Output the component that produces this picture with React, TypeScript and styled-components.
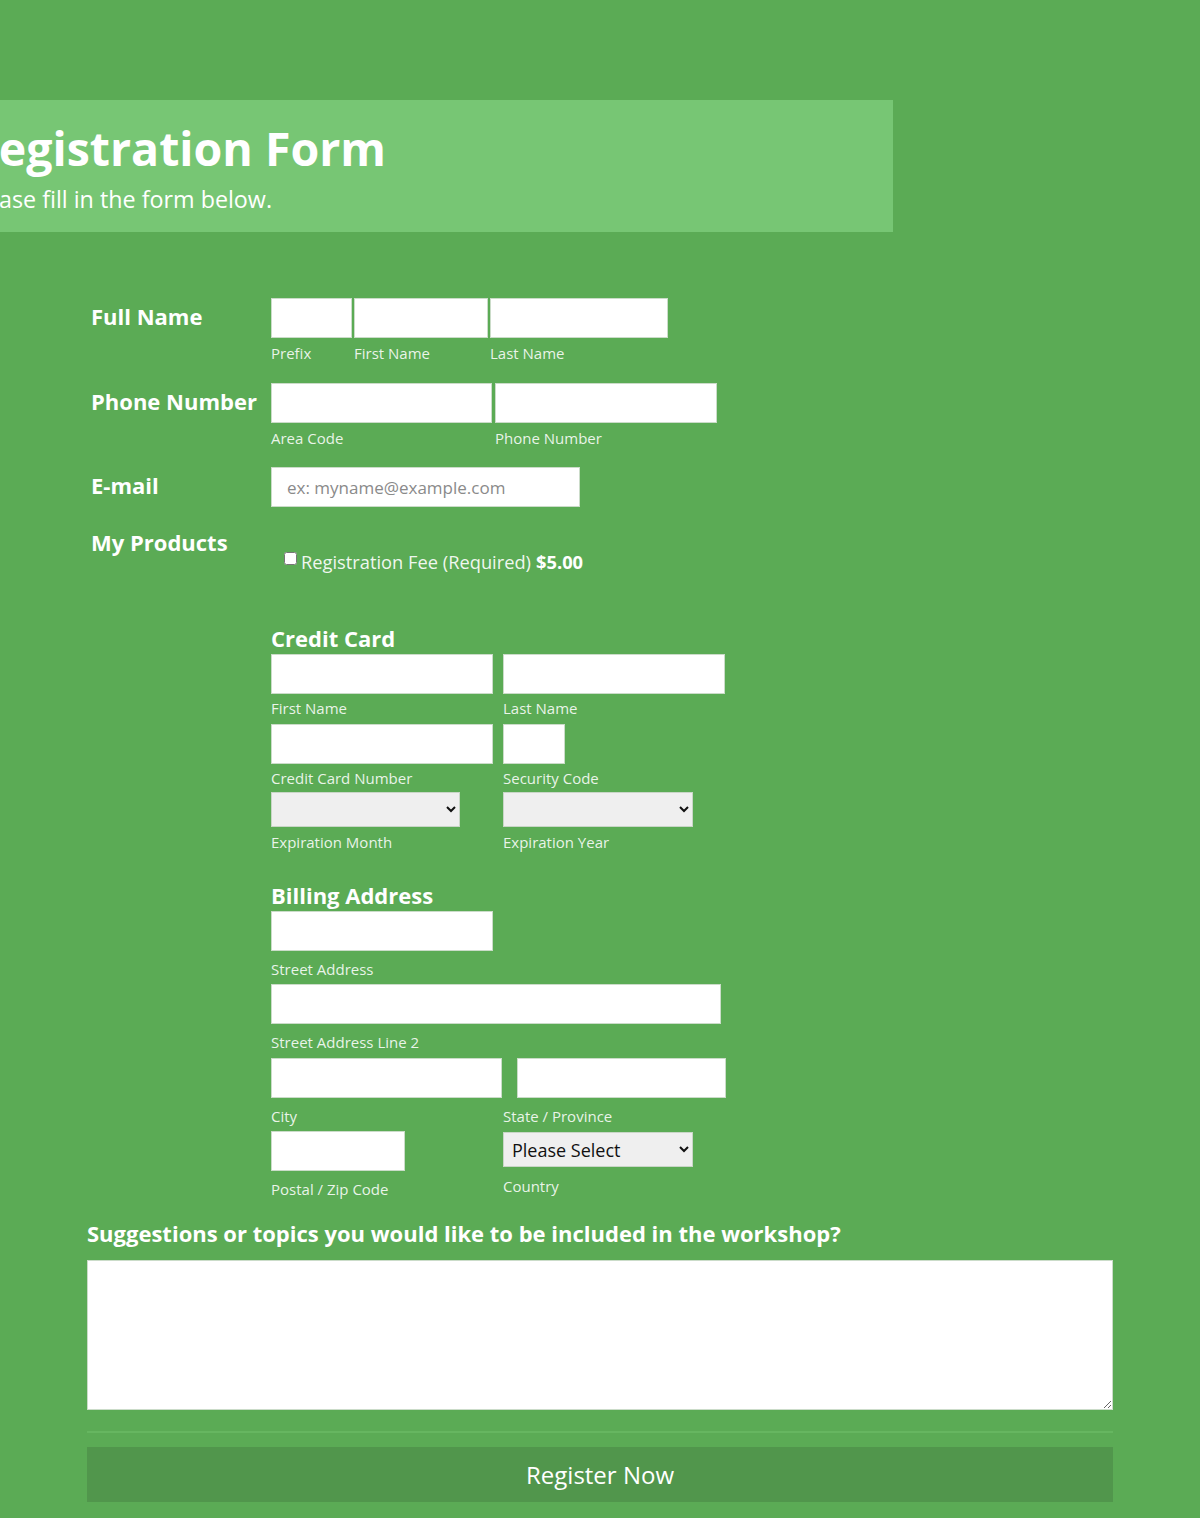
import React from "react";
import styled, { createGlobalStyle } from "styled-components";

const Global = createGlobalStyle`
  html, body { margin: 0; padding: 0; background: #5bab55; }
  body { font-family: "Open Sans", "Noto Sans", sans-serif; color: #fff; }
  * { box-sizing: border-box; }
`;

const Page = styled.div`
  min-height: 1518px;
  padding-top: 100px;
  background: #5bab55;
  overflow: hidden;
`;

const Banner = styled.header`
  width: 893px;
  height: 132px;
  background: #77c674;
  padding: 20px 0 0 0;
  overflow: hidden;
`;

const Title = styled.h1`
  margin: 0 0 0 -32px;
  font-size: 46.5px;
  line-height: 56px;
  font-weight: 700;
  white-space: nowrap;
`;

const Subtitle = styled.p`
  margin: 8px 0 0 -34px;
  font-size: 23.3px;
  line-height: 30px;
  font-weight: 400;
  white-space: nowrap;
`;

const Form = styled.form`
  padding: 66px 0 0 87px;
  width: 1113px;
`;

const Row = styled.div<{ $gap?: number }>`
  display: flex;
  align-items: flex-start;
  margin-bottom: ${(p) => p.$gap ?? 19}px;
`;

const Label = styled.div`
  width: 184px;
  flex: none;
  padding-left: 4px;
  font-size: 22px;
  line-height: 36px;
  font-weight: 700;
  white-space: nowrap;
`;

const Fields = styled.div<{ $pt?: number }>`
  display: flex;
  flex-direction: column;
  padding-top: ${(p) => p.$pt ?? 0}px;
`;

const Inline = styled.div<{ $gap?: number }>`
  display: flex;
  gap: ${(p) => p.$gap ?? 2}px;
`;

const Field = styled.div<{ $ml?: number; $mt?: number }>`
  display: flex;
  flex-direction: column;
  align-items: flex-start;
  margin-left: ${(p) => p.$ml ?? 0}px;
  margin-top: ${(p) => p.$mt ?? 0}px;
`;

const Input = styled.input<{ $w: number }>`
  width: ${(p) => p.$w}px;
  height: 40px;
  border: 1px solid #cbdcc9;
  background: #fff;
  padding: 0 15px;
  font-family: "Open Sans", sans-serif;
  font-size: 17px;
  color: #333;
  outline: none;
  &::placeholder { color: #8a8a8a; }
`;

const Select = styled.select<{ $w: number }>`
  width: ${(p) => p.$w}px;
  height: 35px;
  border: 1px solid #c9d6c7;
  background-color: #efefef;
  font-family: "Open Sans", sans-serif;
  font-size: 18px;
  color: #111;
  padding: 0 4px;
`;

const Sub = styled.span<{ $mt?: number }>`
  display: block;
  margin-top: ${(p) => p.$mt ?? 5}px;
  font-size: 15px;
  line-height: 20px;
  color: rgba(255, 255, 255, 0.88);
  white-space: nowrap;
`;

const CheckLine = styled.label`
  display: flex;
  align-items: flex-start;
  margin-left: 13px;
  font-size: 18.3px;
  line-height: 24px;
  color: rgba(255, 255, 255, 0.92);
  strong { color: #fff; font-weight: 700; margin-left: 5px; }
`;

const Check = styled.input`
  width: 13px;
  height: 13px;
  margin: 2px 4px 0 0;
`;

const Section = styled.div<{ $mt?: number }>`
  margin-left: 184px;
  margin-top: ${(p) => p.$mt ?? 0}px;
  display: flex;
  flex-direction: column;
`;

const SectionTitle = styled.h2`
  margin: 0 0 1px 0;
  font-size: 22px;
  line-height: 30px;
  font-weight: 700;
`;

const Grid = styled.div<{ $mt?: number; $rowGap?: number }>`
  display: grid;
  grid-template-columns: 222px 222px;
  column-gap: 10px;
  row-gap: ${(p) => p.$rowGap ?? 6}px;
  margin-top: ${(p) => p.$mt ?? 0}px;
`;

const Cell = styled.div<{ $mt?: number }>`
  display: flex;
  flex-direction: column;
  align-items: flex-start;
  margin-top: ${(p) => p.$mt ?? 0}px;
`;

const Question = styled.h3`
  margin: 19px 0 12px 0;
  font-size: 22px;
  line-height: 30px;
  font-weight: 700;
  white-space: nowrap;
`;

const TextArea = styled.textarea`
  display: block;
  width: 1026px;
  height: 150px;
  border: 1px solid #cbdcc9;
  background: #fff;
  resize: both;
`;

const Divider = styled.hr`
  margin: 21px 0 14px 0;
  width: 1026px;
  height: 2px;
  border: none;
  background: #66b660;
`;

const Button = styled.button`
  display: block;
  width: 1026px;
  height: 55px;
  border: none;
  background: #51964c;
  color: #fff;
  font-family: "Open Sans", sans-serif;
  font-size: 24px;
  font-weight: 400;
  cursor: pointer;
`;

export default function App() {
  return (
    <>
      <Global />
      <Page>
        <Banner>
          <Title>Registration Form</Title>
          <Subtitle>Please fill in the form below.</Subtitle>
        </Banner>
        <Form onSubmit={(e) => e.preventDefault()}>
          <Row $gap={20}>
            <Label>Full Name</Label>
            <Inline>
              <Field>
                <Input $w={81} />
                <Sub>Prefix</Sub>
              </Field>
              <Field>
                <Input $w={134} />
                <Sub>First Name</Sub>
              </Field>
              <Field>
                <Input $w={178} />
                <Sub>Last Name</Sub>
              </Field>
            </Inline>
          </Row>
          <Row $gap={19}>
            <Label>Phone Number</Label>
            <Inline $gap={3}>
              <Field>
                <Input $w={221} />
                <Sub>Area Code</Sub>
              </Field>
              <Field>
                <Input $w={222} />
                <Sub>Phone Number</Sub>
              </Field>
            </Inline>
          </Row>
          <Row $gap={17}>
            <Label>E-mail</Label>
            <Input $w={309} placeholder="ex: myname@example.com" />
          </Row>
          <Row $gap={0}>
            <Label>My Products</Label>
            <Fields $pt={26}>
              <CheckLine>
                <Check type="checkbox" />
                Registration Fee (Required)<strong>$5.00</strong>
              </CheckLine>
            </Fields>
          </Row>

          <Section $mt={49}>
            <SectionTitle>Credit Card</SectionTitle>
            <Grid $rowGap={6}>
              <Cell>
                <Input $w={222} />
                <Sub $mt={4}>First Name</Sub>
              </Cell>
              <Cell>
                <Input $w={222} />
                <Sub $mt={4}>Last Name</Sub>
              </Cell>
              <Cell>
                <Input $w={222} />
                <Sub $mt={4}>Credit Card Number</Sub>
              </Cell>
              <Cell>
                <Input $w={62} />
                <Sub $mt={4}>Security Code</Sub>
              </Cell>
              <Cell $mt={-2}>
                <Select $w={189}>
                  <option></option>
                </Select>
                <Sub $mt={5}>Expiration Month</Sub>
              </Cell>
              <Cell $mt={-2}>
                <Select $w={190}>
                  <option></option>
                </Select>
                <Sub $mt={5}>Expiration Year</Sub>
              </Cell>
            </Grid>
          </Section>

          <Section $mt={28}>
            <SectionTitle>Billing Address</SectionTitle>
            <Field>
              <Input $w={222} />
              <Sub $mt={8}>Street Address</Sub>
            </Field>
            <Field $mt={5}>
              <Input $w={450} />
              <Sub $mt={8}>Street Address Line 2</Sub>
            </Field>
            <Grid $mt={6} $rowGap={5}>
              <Cell>
                <Input $w={231} />
                <Sub $mt={8}>City</Sub>
              </Cell>
              <Cell>
                <Field $ml={14}>
                  <Input $w={209} />
                </Field>
                <Sub $mt={8}>State / Province</Sub>
              </Cell>
              <Cell>
                <Input $w={134} />
                <Sub $mt={8}>Postal / Zip Code</Sub>
              </Cell>
              <Cell $mt={1}>
                <Select $w={190} defaultValue="">
                  <option value="">Please Select</option>
                  <option>United States</option>
                  <option>Canada</option>
                </Select>
                <Sub $mt={9}>Country</Sub>
              </Cell>
            </Grid>
          </Section>

          <Question>Suggestions or topics you would like to be included in the workshop?</Question>
          <TextArea />
          <Divider />
          <Button type="submit">Register Now</Button>
        </Form>
      </Page>
    </>
  );
}
